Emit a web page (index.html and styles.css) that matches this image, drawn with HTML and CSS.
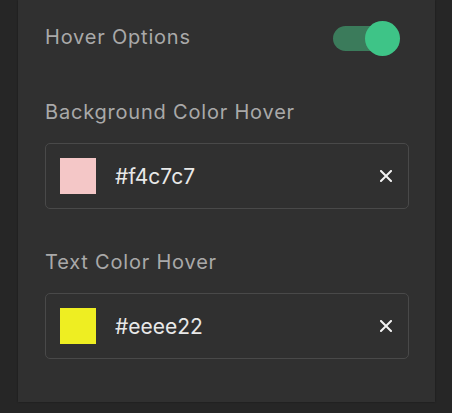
FILE: index.html
```html
<!DOCTYPE html>
<html>
<head>
<meta charset="utf-8">
<link rel="stylesheet" href="styles.css">
</head>
<body>
<div class="panel">
  <div class="toggle-row">
    <span class="label label-top">Hover Options</span>
    <div class="toggle"><div class="track"></div><div class="knob"></div></div>
  </div>
  <div class="field">
    <div class="label">Background Color Hover</div>
    <div class="input">
      <span class="swatch swatch-pink"></span>
      <span class="value">#f4c7c7</span>
      <svg class="clear" width="12" height="12" viewBox="0 0 12 12"><path d="M1 1L11 11M11 1L1 11" stroke="#f2f2f2" stroke-width="2" stroke-linecap="square"/></svg>
    </div>
  </div>
  <div class="field field-last">
    <div class="label">Text Color Hover</div>
    <div class="input">
      <span class="swatch swatch-yellow"></span>
      <span class="value">#eeee22</span>
      <svg class="clear" width="12" height="12" viewBox="0 0 12 12"><path d="M1 1L11 11M11 1L1 11" stroke="#f2f2f2" stroke-width="2" stroke-linecap="square"/></svg>
    </div>
  </div>
</div>
</body>
</html>
```
FILE: styles.css
```css
html, body {
  margin: 0;
  padding: 0;
  background: #262626;
  height: 100%;
}
body {
  font-family: Inter, "Noto Sans", sans-serif;
  width: 452px;
  height: 413px;
  overflow: hidden;
}
.panel {
  margin-left: 18px;
  width: 417px;
  box-sizing: border-box;
  background: #303030;
  padding: 21px 26px 43px 27px;
  box-shadow: 0 0 2px rgba(0,0,0,0.35);
}
.toggle-row {
  display: flex;
  align-items: center;
  justify-content: space-between;
  height: 35px;
  margin-right: 9px;
}
.label {
  font-size: 20px;
  line-height: 24px;
  letter-spacing: 0.8px;
  color: #a9a9a9;
}
.label-top {
  margin-top: -3px;
}
.toggle {
  position: relative;
  width: 67px;
  height: 35px;
}
.track {
  position: absolute;
  left: 0;
  top: 5px;
  width: 52px;
  height: 25px;
  border-radius: 13px;
  background: #3b7b5b;
}
.knob {
  position: absolute;
  right: 0;
  top: 0;
  width: 35px;
  height: 35px;
  border-radius: 50%;
  background: #3ec487;
}
.field {
  margin-top: 44px;
}
.field + .field {
  margin-top: 41px;
}
.input {
  margin-top: 19px;
  height: 66px;
  box-sizing: border-box;
  border: 1px solid #494949;
  border-radius: 5px;
  display: flex;
  align-items: center;
  padding: 0 16px 0 14px;
}
.swatch {
  width: 36px;
  height: 36px;
  flex: none;
}
.swatch-pink { background: #f4c7c7; }
.swatch-yellow { background: #eeee22; }
.value {
  margin-left: 19px;
  font-size: 21px;
  color: #e8e8e8;
  flex: 1;
}
.clear {
  flex: none;
}
```
